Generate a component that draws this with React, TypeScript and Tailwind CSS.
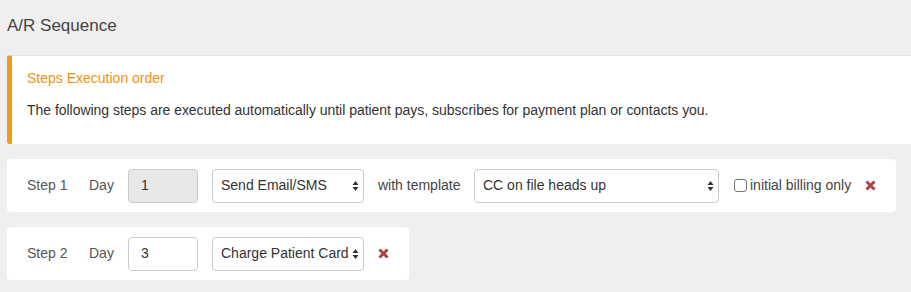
import React from "react";

function Arrows() {
  return (
    <svg width="7" height="12" viewBox="0 0 7 12" className="pointer-events-none absolute right-[4px] top-1/2 -translate-y-1/2">
      <path d="M3.5 1 L6.5 5 L0.5 5 Z" fill="#333" />
      <path d="M3.5 11 L6.5 7 L0.5 7 Z" fill="#333" />
    </svg>
  );
}

function Select({ value, width }: { value: string; width: string }) {
  return (
    <div className={`relative ${width} h-[34px] rounded-[4px] border border-[#cccccc] bg-white flex items-center pl-[8px] text-[14px] text-[#333]`}>
      <span className="whitespace-nowrap">{value}</span>
      <Arrows />
    </div>
  );
}

function XIcon() {
  return (
    <svg width="11" height="11" viewBox="0 0 11 11">
      <path d="M1.5 1.5 L9.5 9.5 M9.5 1.5 L1.5 9.5" stroke="#a94442" strokeWidth="3" strokeLinecap="butt" />
    </svg>
  );
}

export default function App() {
  return (
    <div className="min-h-[292px] w-[911px] bg-[#efefef] overflow-hidden" style={{ fontFamily: '"Liberation Sans", Arial, sans-serif' }}>
      <div className="h-[55px] pl-[7px] pt-[15px] text-[17px] leading-[22px] text-[#444]">A/R Sequence</div>
      <div className="ml-[7px] h-[89px] border-l-[5px] border-[#f39a1a] rounded-l-[3px] border-t border-t-[#e3e3e3] bg-white pl-[15px] pt-[12px]">
        <div className="text-[14px] leading-[20px] text-[#f0920e]">Steps Execution order</div>
        <div className="mt-[12px] text-[14px] leading-[20px] text-[#333] tracking-[-0.03px]">
          The following steps are executed automatically until patient pays, subscribes for payment plan or contacts you.
        </div>
      </div>
      <div className="mt-[15px] ml-[7px] w-[889px] h-[53px] rounded-[4px] bg-white flex items-center pl-[20px] text-[14px] text-[#555]">
        <span className="w-[62px]">Step 1</span>
        <span className="w-[39px]">Day</span>
        <div className="w-[70px] h-[34px] rounded-[4px] border border-[#cccccc] bg-[#e8e8e8] flex items-center pl-[12px] text-[#333]">1</div>
        <div className="ml-[14px]"><Select value="Send Email/SMS" width="w-[152px]" /></div>
        <span className="ml-[14px] w-[96px] text-[#444]">with template</span>
        <Select value="CC on file heads up" width="w-[245px]" />
        <div className="ml-[15px] w-[13px] h-[13px] rounded-[3px] border border-[#767676] bg-white" />
        <span className="ml-[3px] text-[#444]">initial billing only</span>
        <span className="ml-[14px] flex items-center"><XIcon /></span>
      </div>
      <div className="mt-[15px] ml-[7px] w-[402px] h-[53px] rounded-[4px] bg-white flex items-center pl-[20px] text-[14px] text-[#555]">
        <span className="w-[62px]">Step 2</span>
        <span className="w-[39px]">Day</span>
        <div className="w-[70px] h-[34px] rounded-[4px] border border-[#cccccc] bg-white flex items-center pl-[12px] text-[#333]">3</div>
        <div className="ml-[14px]"><Select value="Charge Patient Card" width="w-[152px]" /></div>
        <span className="ml-[14px] flex items-center"><XIcon /></span>
      </div>
    </div>
  );
}
